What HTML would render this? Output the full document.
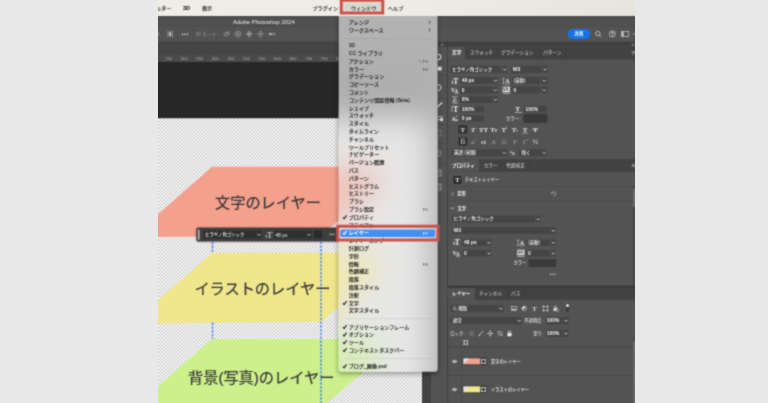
<!DOCTYPE html>
<html lang="ja">
<head>
<meta charset="utf-8">
<title>Photoshop ウィンドウ メニュー</title>
<style>
*{margin:0;padding:0;box-sizing:border-box}
html,body{width:768px;height:403px;overflow:hidden;background:#e8e8e8}
#shot{position:absolute;left:157.9px;top:0;width:476.6px;height:403px;overflow:hidden;background:#535353;filter:url(#soft)}
#P{position:absolute;left:-157.9px;top:0;width:3072px;height:1612px;transform:scale(.25);transform-origin:0 0}
body{font-family:"Liberation Sans","Noto Sans CJK JP",sans-serif;color:#ddd;position:relative}
.a{position:absolute;white-space:nowrap;line-height:1}
.mb{font-size:20.4px;color:#1e1e1e;font-weight:500;-webkit-text-stroke:0.32px #1e1e1e}
.tab{font-size:18.6px;color:#bdbdbd;font-weight:500}
.tab.on{color:#fff;font-weight:700}
.vs{width:2.4px;background:#383838}
.f{background:#454545;border-radius:4px;font-size:18px;color:#f0f0f0;font-weight:500;padding-left:6.4px}
.lb{font-size:17.4px;color:#d8d8d8;font-weight:500}
.mi{font-size:20.4px;color:#1a1a1a;font-weight:500;-webkit-text-stroke:0.4px #1a1a1a}
.sc{font-size:17.6px;color:#505050;font-weight:500}
#checker{background-color:#fff;background-image:conic-gradient(#cbcbcb 25%,#fff 0 50%,#cbcbcb 0 75%,#fff 0);background-size:14px 14px}

</style>
</head>
<body>
<svg width="0" height="0" style="position:absolute"><defs><filter id="soft" x="0" y="0" width="100%" height="100%" color-interpolation-filters="sRGB"><feConvolveMatrix order="3" kernelMatrix="1 2 1 2 9 2 1 2 1" divisor="21" edgeMode="duplicate" preserveAlpha="true"/></filter></defs></svg>
<div id="shot"><div id="P">
<div class="a " style="left:632px;top:64px;width:1908px;height:42px;background:#505050;"></div>
<div class="a " style="left:632px;top:64px;width:1908px;height:2.8px;background:#454545;"></div>
<div class="a " style="left:632px;top:104px;width:1908px;height:2.8px;background:#474747;"></div>
<span class="a " style="left:932px;top:75.6px;font-size:23.6px;color:#e6e6e6;font-weight:500">Adobe Photoshop 2024</span>
<div class="a " style="left:632px;top:106px;width:1908px;height:60px;background:#535353;"></div>
<div class="a " style="left:632px;top:166px;width:1092px;height:54px;background:#454545;"></div>
<div class="a " style="left:632px;top:219.2px;width:1092px;height:28.4px;background:#4a4a4a;"></div>
<div class="a " style="left:632px;top:247.6px;width:1056px;height:1368px;background:#272727;"></div>
<div class="a " style="left:632px;top:468.8px;width:1056px;height:5.6px;background:#1f1f1f;"></div>
<div id="checker" class="a" style="left:632px;top:474px;width:1056px;height:1140px"></div>
<svg class="a" style="left:632px;top:0px;width:1908px;height:1612px" viewBox="158 0 477 403">
<polygon points="212.1,166.8 375,166.8 375,189 321.6,235.5 158,237.1 158,214.2" fill="#f3a08d"/>
<polygon points="212.1,252.8 375,252.8 375,275.3 321.6,321.8 158,323.4 158,300.2" fill="#f0e68c"/>
<polygon points="212.1,338.9 375,338.9 375,361.4 321.6,407.9 158,409.5 158,386.3" fill="#cdf08c"/>
<g stroke="#3f80e8" stroke-opacity="0.95" stroke-width="1.35" stroke-dasharray="2.6 1.2" fill="none">
<path d="M212.5 241.8V252.8M212.5 322.6V338.9"/><path d="M321 241.5V403"/></g>
<g font-family="'Liberation Sans','Noto Sans CJK JP',sans-serif" font-size="15.2" fill="#363636" font-weight="400" stroke="#363636" stroke-width="0.22">
<text x="215" y="208.3">文字のレイヤー</text>
<text x="194.4" y="294">イラストのレイヤー</text>
<text x="188" y="383">背景(写真)のレイヤー</text></g></svg>
<svg class="a" style="left:666px;top:120px;width:32px;height:32px" viewBox="0 0 8 8"><path d="M1.6 0.8V7.2M5.8 0.8V7.2" stroke="#dcdcdc" stroke-width="0.55"/><rect x="3" y="1.8" width="1.4" height="4.4" fill="#dcdcdc"/></svg>
<div class="a " style="left:709.6px;top:114px;width:2px;height:44px;background:#454545;"></div>
<span class="a " style="left:726.4px;top:124.8px;font-size:22.4px;letter-spacing:2px;color:#dcdcdc">•••</span>
<div class="a " style="left:773.2px;top:114px;width:2px;height:44px;background:#454545;"></div>
<span class="a " style="left:780.8px;top:126.8px;font-size:18.4px;color:#8c8c8c;font-weight:500">3D モード :</span>
<svg class="a" style="left:890.8px;top:120px;width:32px;height:32px" viewBox="-4 -4 8 8"><ellipse rx="2.9" ry="1.6" fill="none" stroke="#a0a0a0" stroke-width="0.7" transform="rotate(-20)"/><circle r="1" cx="0.6" cy="-1" fill="none" stroke="#a0a0a0" stroke-width="0.5"/></svg>
<svg class="a" style="left:936px;top:120px;width:32px;height:32px" viewBox="-4 -4 8 8"><circle r="2.9" fill="none" stroke="#a0a0a0" stroke-width="0.7"/><circle r="1.3" fill="none" stroke="#a0a0a0" stroke-width="0.7"/></svg>
<svg class="a" style="left:981.2px;top:120px;width:32px;height:32px" viewBox="-4 -4 8 8"><path d="M0 -3.4L1.5 -1.5H-1.5ZM0 3.4L1.5 1.5H-1.5ZM-3.4 0L-1.5 1.5V-1.5ZM3.4 0L1.5 1.5V-1.5Z" fill="#a0a0a0"/><circle r="1.3" fill="#a0a0a0"/></svg>
<svg class="a" style="left:1025.6px;top:120px;width:32px;height:32px" viewBox="-4 -4 8 8"><path d="M0 -3.4L1.2 -1.9H-1.2ZM0 3.4L1.2 1.9H-1.2ZM-3.4 0L-1.9 1.2V-1.2ZM3.4 0L1.9 1.2V-1.2Z" fill="#a0a0a0"/><path d="M0 -2V2M-2 0H2" stroke="#a0a0a0" stroke-width="0.6"/><circle r="0.7" fill="#a0a0a0"/></svg>
<svg class="a" style="left:1070.8px;top:120px;width:32px;height:32px" viewBox="-4 -4 8 8"><rect x="-3" y="-1.2" width="3.6" height="2.4" fill="#a0a0a0"/><path d="M0.9 0L2.6 -1.4V1.4Z" fill="#a0a0a0"/><path d="M3.2 -1.6V1.6" stroke="#a0a0a0" stroke-width="0.5"/></svg>
<svg class="a" style="left:628px;top:124px;width:16px;height:24px" viewBox="0 0 4 6"><path d="M1 1L2.6 4.6" stroke="#a0a0a0" stroke-width="0.7"/></svg>
<div class="a " style="left:2270.8px;top:115.6px;width:90px;height:40.4px;background:#1473e6;border-radius:20.2px"></div>
<span class="a " style="left:2297.6px;top:126.4px;font-size:18.4px;color:#fff;font-weight:700">共有</span>
<svg class="a" style="left:2377.2px;top:120px;width:32px;height:32px" viewBox="0 0 8 8"><circle cx="3.6" cy="3.6" r="2.2" fill="none" stroke="#e0e0e0" stroke-width="0.7"/><path d="M5.2 5.2L7 7" stroke="#e0e0e0" stroke-width="0.8"/></svg>
<svg class="a" style="left:2432.8px;top:120px;width:32px;height:32px" viewBox="0 0 8 8"><circle cx="4" cy="4" r="3.1" fill="none" stroke="#e0e0e0" stroke-width="0.65"/><text x="4" y="5.9" text-anchor="middle" font-size="5" font-weight="700" fill="#e0e0e0" font-family="Liberation Sans,sans-serif">?</text></svg>
<svg class="a" style="left:2484px;top:123.2px;width:34px;height:25.6px" viewBox="0 0 8.5 6.4"><rect x="0.4" y="0.5" width="7.4" height="5.3" fill="none" stroke="#e0e0e0" stroke-width="0.6"/><rect x="0.4" y="0.5" width="2.4" height="5.3" fill="#bdbdbd"/></svg>
<svg class="a" style="left:2526px;top:126px;width:20px;height:20px" viewBox="0 0 5 5"><path d="M1.2 1.8L2.6 3.2L4 1.8" fill="none" stroke="#c8c8c8" stroke-width="0.6"/></svg>
<div class="a " style="left:658.8px;top:220px;width:1.6px;height:27.2px;background:#626262;"></div>
<span class="a " style="left:662px;top:226px;font-size:16px;color:#ababab">250</span>
<div class="a " style="left:721px;top:220px;width:1.6px;height:27.2px;background:#626262;"></div>
<span class="a " style="left:724.2px;top:226px;font-size:16px;color:#ababab">300</span>
<div class="a " style="left:783.2px;top:220px;width:1.6px;height:27.2px;background:#626262;"></div>
<span class="a " style="left:786.4px;top:226px;font-size:16px;color:#ababab">350</span>
<div class="a " style="left:845.4px;top:220px;width:1.6px;height:27.2px;background:#626262;"></div>
<span class="a " style="left:848.6px;top:226px;font-size:16px;color:#ababab">400</span>
<div class="a " style="left:907.6px;top:220px;width:1.6px;height:27.2px;background:#626262;"></div>
<span class="a " style="left:910.8px;top:226px;font-size:16px;color:#ababab">450</span>
<div class="a " style="left:969.8px;top:220px;width:1.6px;height:27.2px;background:#626262;"></div>
<span class="a " style="left:973px;top:226px;font-size:16px;color:#ababab">500</span>
<div class="a " style="left:1032px;top:220px;width:1.6px;height:27.2px;background:#626262;"></div>
<span class="a " style="left:1035.2px;top:226px;font-size:16px;color:#ababab">550</span>
<div class="a " style="left:1094.2px;top:220px;width:1.6px;height:27.2px;background:#626262;"></div>
<span class="a " style="left:1097.4px;top:226px;font-size:16px;color:#ababab">600</span>
<div class="a " style="left:1156.4px;top:220px;width:1.6px;height:27.2px;background:#626262;"></div>
<span class="a " style="left:1159.6px;top:226px;font-size:16px;color:#ababab">650</span>
<div class="a " style="left:1218.6px;top:220px;width:1.6px;height:27.2px;background:#626262;"></div>
<span class="a " style="left:1221.8px;top:226px;font-size:16px;color:#ababab">700</span>
<div class="a " style="left:1280.8px;top:220px;width:1.6px;height:27.2px;background:#626262;"></div>
<span class="a " style="left:1284px;top:226px;font-size:16px;color:#ababab">750</span>
<div class="a " style="left:1343px;top:220px;width:1.6px;height:27.2px;background:#626262;"></div>
<span class="a " style="left:1346.2px;top:226px;font-size:16px;color:#ababab">800</span>
<div class="a " style="left:785.6px;top:910.4px;width:600px;height:56px;background:#3e3e3e;border-radius:8px;box-shadow:0px 2px 8px rgba(0,0,0,.4)"></div>
<div class="a " style="left:792px;top:917.6px;width:6px;height:41.6px;background:#c4c4c4;border-radius:2px"></div>
<div class="a " style="left:812px;top:922.4px;width:212px;height:32px;background:#303030;border-radius:4px"></div>
<span class="a " style="left:820px;top:930.4px;font-size:17.6px;color:#e0e0e0;font-weight:500">ヒラギノ角ゴシック</span>
<div class="a " style="left:1026.4px;top:922.4px;width:20px;height:32px;background:#303030;border-radius:4px"></div>
<svg class="a" style="left:1024.4px;top:927.2px;width:24px;height:24px" viewBox="-3 -3 6 6"><path d="M-1.35 -0.675L0 0.675L1.35 -0.675" fill="none" stroke="#e6e6e6" stroke-width="0.9"/></svg>
<svg class="a" style="left:1057.6px;top:920px;width:36px;height:40px" viewBox="0 0 9 10"><text x="0.2" y="8.2" font-size="4.6" style="font-family:Liberation Serif,serif;fill:#e6e6e6">T</text><text x="2.4" y="8.2" font-size="9" style="font-family:Liberation Serif,serif;fill:#e6e6e6">T</text></svg>
<div class="a " style="left:1096px;top:922.4px;width:128px;height:32px;background:#303030;border-radius:4px"></div>
<span class="a " style="left:1100.8px;top:928.8px;font-size:20.4px;color:#e0e0e0;font-weight:500">48 px</span>
<div class="a " style="left:1226.4px;top:922.4px;width:20px;height:32px;background:#303030;border-radius:4px"></div>
<svg class="a" style="left:1224.4px;top:927.2px;width:24px;height:24px" viewBox="-3 -3 6 6"><path d="M-1.35 -0.675L0 0.675L1.35 -0.675" fill="none" stroke="#e6e6e6" stroke-width="0.9"/></svg>
<div class="a " style="left:1255.6px;top:922.4px;width:32.4px;height:32px;background:#2a2a2a;border-radius:2.4px"></div>
<span class="a " style="left:1316px;top:928px;font-size:20px;letter-spacing:1.2px;color:#c8c8c8">•••</span>
<div class="a " style="left:1688px;top:220px;width:36px;height:1392px;background:#424242;"></div>
<div class="a " style="left:1724px;top:166px;width:66px;height:1448px;background:#535353;"></div>
<div class="a " style="left:1724px;top:167.2px;width:816px;height:20.4px;background:#404040;"></div>
<div class="a " style="left:1790px;top:186px;width:750px;height:1428px;background:#535353;"></div>
<div class="a " style="left:1788px;top:166px;width:3.2px;height:1448px;background:#3a3a3a;"></div>
<div class="a " style="left:1790px;top:187.6px;width:750px;height:50px;background:#424242;"></div>
<div class="a " style="left:1792px;top:187.6px;width:68px;height:50px;background:#535353;"></div>
<span class="a tab on" style="left:1808px;top:201.2px;">文字</span>
<span class="a tab" style="left:1880px;top:201.2px;">スウォッチ</span>
<span class="a tab" style="left:2004px;top:201.2px;">グラデーション</span>
<span class="a tab" style="left:2172px;top:201.2px;">パターン</span>
<div class="a " style="left:1990px;top:190.4px;width:2.4px;height:47.2px;background:#383838;"></div>
<div class="a " style="left:2156px;top:190.4px;width:2.4px;height:47.2px;background:#383838;"></div>
<div class="a " style="left:2261.6px;top:190.4px;width:2.4px;height:47.2px;background:#383838;"></div>
<div class="a f" style="left:1801.2px;top:263.2px;width:203.2px;height:28.8px;line-height:28.8px;font-weight:500">ヒラギノ角ゴシック</div>
<div class="a " style="left:2008.8px;top:263.2px;width:20px;height:28.8px;background:#454545;border-radius:4px"></div>
<svg class="a" style="left:2006.8px;top:266.4px;width:24px;height:24px" viewBox="-3 -3 6 6"><path d="M-1.35 -0.675L0 0.675L1.35 -0.675" fill="none" stroke="#e6e6e6" stroke-width="0.9"/></svg>
<div class="a f" style="left:2044.4px;top:263.2px;width:120.8px;height:28.8px;line-height:28.8px;font-size:20px;font-weight:700">W3</div>
<div class="a " style="left:2169.2px;top:263.2px;width:20.8px;height:28.8px;background:#454545;border-radius:4px"></div>
<svg class="a" style="left:2167.6px;top:266.4px;width:24px;height:24px" viewBox="-3 -3 6 6"><path d="M-1.35 -0.675L0 0.675L1.35 -0.675" fill="none" stroke="#e6e6e6" stroke-width="0.9"/></svg>
<div class="a f" style="left:1840px;top:308px;width:129.6px;height:28px;line-height:28px;font-size:19.6px;padding-left:7.2px;font-weight:700">48 px</div>
<div class="a " style="left:1972.8px;top:308px;width:18.4px;height:28px;background:#454545;border-radius:4px"></div>
<svg class="a" style="left:1970px;top:310.8px;width:24px;height:24px" viewBox="-3 -3 6 6"><path d="M-1.35 -0.675L0 0.675L1.35 -0.675" fill="none" stroke="#e6e6e6" stroke-width="0.9"/></svg>
<div class="a f" style="left:2047.2px;top:308px;width:114px;height:28px;line-height:28px;">(自動)</div>
<div class="a " style="left:2164.8px;top:308px;width:25.2px;height:28px;background:#454545;border-radius:4px"></div>
<svg class="a" style="left:2165.4px;top:310.8px;width:24px;height:24px" viewBox="-3 -3 6 6"><path d="M-1.35 -0.675L0 0.675L1.35 -0.675" fill="none" stroke="#e6e6e6" stroke-width="0.9"/></svg>
<div class="a f" style="left:1840px;top:346.4px;width:129.6px;height:27.2px;line-height:27.2px;font-size:19.6px;padding-left:7.2px;font-weight:700">0</div>
<div class="a " style="left:1972.8px;top:346.4px;width:18.4px;height:27.2px;background:#454545;border-radius:4px"></div>
<svg class="a" style="left:1970px;top:348.8px;width:24px;height:24px" viewBox="-3 -3 6 6"><path d="M-1.35 -0.675L0 0.675L1.35 -0.675" fill="none" stroke="#e6e6e6" stroke-width="0.9"/></svg>
<div class="a f" style="left:2047.2px;top:346.4px;width:114px;height:27.2px;line-height:27.2px;font-size:19.6px;padding-left:7.2px;font-weight:700">0</div>
<div class="a " style="left:2164.8px;top:346.4px;width:25.2px;height:27.2px;background:#454545;border-radius:4px"></div>
<svg class="a" style="left:2165.4px;top:348.8px;width:24px;height:24px" viewBox="-3 -3 6 6"><path d="M-1.35 -0.675L0 0.675L1.35 -0.675" fill="none" stroke="#e6e6e6" stroke-width="0.9"/></svg>
<div class="a f" style="left:1840px;top:384px;width:129.6px;height:27.6px;line-height:27.6px;font-size:19.6px;padding-left:7.2px;font-weight:700">0%</div>
<div class="a " style="left:1972.8px;top:384px;width:18.4px;height:27.6px;background:#454545;border-radius:4px"></div>
<svg class="a" style="left:1970px;top:386.6px;width:24px;height:24px" viewBox="-3 -3 6 6"><path d="M-1.35 -0.675L0 0.675L1.35 -0.675" fill="none" stroke="#e6e6e6" stroke-width="0.9"/></svg>
<div class="a f" style="left:1840px;top:424px;width:94.8px;height:24.8px;line-height:24.8px;font-size:19.6px;padding-left:7.2px;font-weight:700">100%</div>
<div class="a f" style="left:2095.2px;top:424px;width:92px;height:24.8px;line-height:24.8px;font-size:19.6px;padding-left:7.2px;font-weight:700">100%</div>
<div class="a f" style="left:1840px;top:461.6px;width:94.8px;height:24.8px;line-height:24.8px;font-size:19.6px;padding-left:7.2px;font-weight:700">0 px</div>
<span class="a lb" style="left:2024px;top:464.8px;">カラー :</span>
<div class="a " style="left:2093.2px;top:456px;width:96.8px;height:36px;background:#3a3a3a;border-radius:4px"></div>
<svg class="a" style="left:1804px;top:306px;width:32px;height:34px" viewBox="0 0 8 8.5"><text x="0.2" y="7" font-size="4.2" style="font-family:'Liberation Serif',serif;fill:#ececec;font-weight:700">T</text><text x="2.2" y="7" font-size="7.6" style="font-family:'Liberation Serif',serif;fill:#ececec;font-weight:700">T</text></svg>
<svg class="a" style="left:2008px;top:306px;width:34px;height:34px" viewBox="0 0 8.5 8.5"><text x="3.2" y="6.6" font-size="6" style="font-family:'Liberation Serif',serif;fill:#ececec;font-weight:700">A</text><path d="M1.5 1.5V7.5M0.6 2.6L1.5 1.5L2.4 2.6M0.6 6.4L1.5 7.5L2.4 6.4" stroke="#e0e0e0" stroke-width="0.5" fill="none"/><path d="M3 7.6H8" stroke="#e0e0e0" stroke-width="0.5"/></svg>
<svg class="a" style="left:1804px;top:344px;width:32px;height:34px" viewBox="0 0 8 8.5"><text x="0" y="5.6" font-size="5.4" style="font-family:'Liberation Serif',serif;fill:#ececec;font-weight:700">V</text><text x="3.2" y="6.6" font-size="5.4" style="font-family:'Liberation Serif',serif;fill:#ececec;font-weight:700">A</text><path d="M3.5 7.8H7.6" stroke="#e0e0e0" stroke-width="0.5"/></svg>
<svg class="a" style="left:2008px;top:344px;width:34px;height:34px" viewBox="0 0 8.5 8.5"><rect x="0.6" y="0.6" width="7.3" height="5.6" fill="#e0e0e0"/><text x="0.8" y="5.4" font-size="4.6" font-weight="700" style="font-family:'Liberation Sans',sans-serif;fill:#454545">VA</text><path d="M0.6 7.6H7.9" stroke="#e0e0e0" stroke-width="0.6"/></svg>
<svg class="a" style="left:1804px;top:382px;width:32px;height:34px" viewBox="0 0 8 8.5"><text x="1.2" y="5.6" font-size="4.6" style="font-family:'Noto Sans CJK JP',sans-serif;fill:#e0e0e0">あ</text><path d="M0.8 7.6H7" stroke="#e0e0e0" stroke-width="0.6"/><path d="M0.8 1H7" stroke="#e0e0e0" stroke-width="0.4"/></svg>
<svg class="a" style="left:1804px;top:420px;width:36px;height:32px" viewBox="0 0 9 8"><path d="M1 1V7" stroke="#e0e0e0" stroke-width="0.6"/><text x="2" y="7" font-size="8" style="font-family:'Liberation Serif',serif;fill:#ececec;font-weight:700">T</text></svg>
<svg class="a" style="left:2054px;top:420px;width:40px;height:32px" viewBox="0 0 10 8"><text x="1.8" y="6" font-size="7" style="font-family:'Liberation Serif',serif;fill:#ececec;font-weight:700">T</text><path d="M1 7.4H8.6" stroke="#e0e0e0" stroke-width="0.6"/></svg>
<svg class="a" style="left:1804px;top:458px;width:36px;height:32px" viewBox="0 0 9 8"><text x="0.6" y="6.6" font-size="6" style="font-family:'Liberation Serif',serif;fill:#ececec;font-weight:700">A</text><text x="4.4" y="6.6" font-size="4.4" style="font-family:'Liberation Serif',serif;fill:#ececec;font-weight:700">a</text><path d="M5.6 0.6V2.6" stroke="#e0e0e0" stroke-width="0.5"/></svg>
<div class="a " style="left:1832.8px;top:500.4px;width:36.4px;height:34.8px;background:#333;border-radius:4px"></div>
<div class="a " style="left:1832.8px;top:548px;width:36.4px;height:34.8px;background:#333;border-radius:4px"></div>
<svg class="a" style="left:1831.2px;top:499.6px;width:40px;height:36px" viewBox="-5 -4.5 10 9"><text x="0" y="2.3" text-anchor="middle" font-size="6.8" font-weight="700" fill="#e4e4e4" style="font-family:'Liberation Serif',serif">T</text></svg>
<svg class="a" style="left:1871.6px;top:499.6px;width:40px;height:36px" viewBox="-5 -4.5 10 9"><text x="0" y="2.3" text-anchor="middle" font-size="6.8" font-weight="700" font-style="italic" fill="#e4e4e4" style="font-family:'Liberation Serif',serif">T</text></svg>
<svg class="a" style="left:1913.6px;top:499.6px;width:40px;height:36px" viewBox="-5 -4.5 10 9"><text x="0" y="2.3" text-anchor="middle" font-size="6.8" font-weight="700" fill="#e4e4e4" style="font-family:'Liberation Serif',serif">TT</text></svg>
<svg class="a" style="left:1954px;top:499.6px;width:40px;height:36px" viewBox="-5 -4.5 10 9"><text x="-1" y="2.3" text-anchor="middle" font-size="6.8" font-weight="700" fill="#e4e4e4" style="font-family:'Liberation Serif',serif">T</text><text x="2.4" y="2.3" text-anchor="middle" font-size="4.8" font-weight="700" fill="#e4e4e4" style="font-family:'Liberation Serif',serif">T</text></svg>
<svg class="a" style="left:1997.2px;top:499.6px;width:40px;height:36px" viewBox="-5 -4.5 10 9"><text x="-0.6" y="2.3" text-anchor="middle" font-size="6.8" font-weight="700" fill="#e4e4e4" style="font-family:'Liberation Serif',serif">T</text><text x="2.6" y="-0.6" text-anchor="middle" font-size="4" fill="#e4e4e4" style="font-family:'Liberation Serif',serif">1</text></svg>
<svg class="a" style="left:2037.6px;top:499.6px;width:40px;height:36px" viewBox="-5 -4.5 10 9"><text x="-0.6" y="2.3" text-anchor="middle" font-size="6.8" font-weight="700" fill="#e4e4e4" style="font-family:'Liberation Serif',serif">T</text><text x="2.6" y="2.8" text-anchor="middle" font-size="4" fill="#e4e4e4" style="font-family:'Liberation Serif',serif">1</text></svg>
<svg class="a" style="left:2079.6px;top:499.6px;width:40px;height:36px" viewBox="-5 -4.5 10 9"><text x="0" y="2.3" text-anchor="middle" font-size="7" font-weight="700" fill="#e4e4e4" style="font-family:'Liberation Serif',serif">T</text><path d="M-3 3.6H3" stroke="#e4e4e4" stroke-width="0.5"/></svg>
<svg class="a" style="left:2121.2px;top:499.6px;width:40px;height:36px" viewBox="-5 -4.5 10 9"><text x="0" y="2.3" text-anchor="middle" font-size="6.8" font-weight="700" fill="#e4e4e4" style="font-family:'Liberation Serif',serif">T</text><path d="M-3 0.2H3" stroke="#e4e4e4" stroke-width="0.5"/></svg>
<svg class="a" style="left:1831.2px;top:547.6px;width:40px;height:36px" viewBox="-5 -4.5 10 9"><text x="0" y="2.3" text-anchor="middle" font-size="7.6" fill="#e4e4e4" style="font-family:'Liberation Serif',serif">fi</text></svg>
<svg class="a" style="left:1871.6px;top:547.6px;width:40px;height:36px" viewBox="-5 -4.5 10 9"><text x="0" y="2.4" text-anchor="middle" font-size="7" font-weight="700" font-style="italic" fill="#989898" style="font-family:'Liberation Serif',serif">o</text><path d="M1 -1.6Q2.6 -3.4 3 -1.6" stroke="#989898" stroke-width="0.4" fill="none"/></svg>
<svg class="a" style="left:1913.6px;top:547.6px;width:40px;height:36px" viewBox="-5 -4.5 10 9"><text x="0" y="2.3" text-anchor="middle" font-size="7" font-weight="700" fill="#d0d0d0" style="font-family:'Liberation Serif',serif">st</text></svg>
<svg class="a" style="left:1954px;top:547.6px;width:40px;height:36px" viewBox="-5 -4.5 10 9"><text x="0" y="2.3" text-anchor="middle" font-size="6.8" font-weight="700" font-style="italic" fill="#989898" style="font-family:'Liberation Serif',serif">A</text></svg>
<svg class="a" style="left:1997.2px;top:547.6px;width:40px;height:36px" viewBox="-5 -4.5 10 9"><text x="0" y="2.3" text-anchor="middle" font-size="5.4" font-style="italic" fill="#989898" style="font-family:'Liberation Serif',serif">aa</text><path d="M-2.8 -2.4H2.8" stroke="#989898" stroke-width="0.4"/></svg>
<svg class="a" style="left:2037.6px;top:547.6px;width:40px;height:36px" viewBox="-5 -4.5 10 9"><text x="0" y="2.3" text-anchor="middle" font-size="6.8" font-weight="700" font-style="italic" fill="#989898" style="font-family:'Liberation Serif',serif">T</text></svg>
<svg class="a" style="left:2079.6px;top:547.6px;width:40px;height:36px" viewBox="-5 -4.5 10 9"><text x="-1" y="2.3" text-anchor="middle" font-size="6.8" font-weight="700" fill="#989898" style="font-family:'Liberation Serif',serif">1</text><text x="1.9" y="-0.4" text-anchor="middle" font-size="3.2" fill="#989898" style="font-family:'Liberation Serif',serif">st</text></svg>
<svg class="a" style="left:2121.2px;top:547.6px;width:40px;height:36px" viewBox="-5 -4.5 10 9"><text x="0" y="2.3" text-anchor="middle" font-size="7" font-weight="700" fill="#e4e4e4" style="font-family:'Liberation Serif',serif">½</text></svg>
<div class="a f" style="left:1806px;top:598.4px;width:222.8px;height:26.4px;line-height:26.4px;padding-left:10px">英語 (米国)</div>
<svg class="a" style="left:2005.2px;top:600.4px;width:24px;height:24px" viewBox="-3 -3 6 6"><path d="M-1.35 -0.675L0 0.675L1.35 -0.675" fill="none" stroke="#e6e6e6" stroke-width="0.9"/></svg>
<svg class="a" style="left:2038.4px;top:598.4px;width:28px;height:28px" viewBox="0 0 7 7"><text x="0.2" y="3.8" font-size="4" fill="#e4e4e4" style="font-family:'Liberation Sans',sans-serif">a</text><text x="2.6" y="5.6" font-size="4.6" fill="#e4e4e4" style="font-family:'Liberation Sans',sans-serif">a</text></svg>
<div class="a f" style="left:2074.8px;top:598.4px;width:112.4px;height:26.4px;line-height:26.4px;padding-left:11.6px">強く</div>
<svg class="a" style="left:2165.2px;top:600.4px;width:24px;height:24px" viewBox="-3 -3 6 6"><path d="M-1.35 -0.675L0 0.675L1.35 -0.675" fill="none" stroke="#e6e6e6" stroke-width="0.9"/></svg>
<div class="a " style="left:1790px;top:636.8px;width:750px;height:50px;background:#424242;"></div>
<div class="a " style="left:1790px;top:636.8px;width:126.4px;height:50px;background:#535353;"></div>
<span class="a tab on" style="left:1808px;top:653.2px;">プロパティ</span>
<span class="a tab" style="left:1934.8px;top:653.2px;">カラー</span>
<span class="a tab" style="left:2024.8px;top:653.2px;">色調補正</span>
<div class="a " style="left:2005.6px;top:638.8px;width:2.4px;height:48px;background:#383838;"></div>
<div class="a " style="left:2118px;top:638.8px;width:2.4px;height:48px;background:#383838;"></div>
<svg class="a" style="left:2526.4px;top:203.2px;width:16px;height:16px" viewBox="0 0 4 4"><path d="M0 0.7H4M0 2H4M0 3.3H4" stroke="#c8c8c8" stroke-width="0.55"/></svg>
<svg class="a" style="left:2526.4px;top:654px;width:16px;height:16px" viewBox="0 0 4 4"><path d="M0 0.7H4M0 2H4M0 3.3H4" stroke="#c8c8c8" stroke-width="0.55"/></svg>
<svg class="a" style="left:2526.4px;top:1167.2px;width:16px;height:16px" viewBox="0 0 4 4"><path d="M0 0.7H4M0 2H4M0 3.3H4" stroke="#c8c8c8" stroke-width="0.55"/></svg>
<div class="a " style="left:1812.8px;top:703.6px;width:33.6px;height:32px;background:#2e2e2e;border-radius:3.2px"></div>
<svg class="a" style="left:1812.8px;top:703.6px;width:33.6px;height:32px" viewBox="0 0 8.4 8"><text x="4.2" y="6.3" text-anchor="middle" font-size="6.6" font-weight="700" fill="#f0f0f0" style="font-family:'Liberation Serif',serif">T</text></svg>
<span class="a lb" style="left:1858.8px;top:711.2px;color:#e6e6e6">テキストレイヤー</span>
<div class="a " style="left:1790px;top:744.8px;width:750px;height:2.4px;background:#464646;"></div>
<svg class="a" style="left:1802px;top:766px;width:16px;height:20px" viewBox="0 0 4 5"><path d="M1.2 0.8L2.8 2.5L1.2 4.2" fill="none" stroke="#d0d0d0" stroke-width="0.6"/></svg>
<span class="a lb" style="left:1828.8px;top:766px;color:#f0f0f0;font-weight:700">変形</span>
<svg class="a" style="left:2200.8px;top:761.2px;width:24px;height:28px" viewBox="0 0 6 7"><path d="M1.4 3.2A2 2 0 1 1 3.2 5.6" fill="none" stroke="#c8c8c8" stroke-width="0.6"/><path d="M0.3 2.2L1.4 3.6L2.8 2.6" fill="none" stroke="#c8c8c8" stroke-width="0.6"/></svg>
<div class="a " style="left:1790px;top:800.8px;width:750px;height:2.4px;background:#464646;"></div>
<svg class="a" style="left:1798px;top:821.2px;width:24px;height:24px" viewBox="-3 -3 6 6"><path d="M-1.35 -0.675L0 0.675L1.35 -0.675" fill="none" stroke="#e6e6e6" stroke-width="0.9"/></svg>
<span class="a lb" style="left:1829.6px;top:823.6px;color:#f0f0f0;font-weight:700">文字</span>
<div class="a f" style="left:1807.6px;top:862px;width:332px;height:27.6px;line-height:27.6px;font-weight:500">ヒラギノ角ゴシック</div>
<div class="a " style="left:2143.2px;top:862px;width:20px;height:27.6px;background:#454545;border-radius:4px"></div>
<svg class="a" style="left:2141.2px;top:864.6px;width:24px;height:24px" viewBox="-3 -3 6 6"><path d="M-1.35 -0.675L0 0.675L1.35 -0.675" fill="none" stroke="#e6e6e6" stroke-width="0.9"/></svg>
<div class="a f" style="left:1807.6px;top:908px;width:392px;height:27.6px;line-height:27.6px;font-size:20px;font-weight:700">W3</div>
<div class="a " style="left:2202.4px;top:908px;width:20.8px;height:27.6px;background:#454545;border-radius:4px"></div>
<svg class="a" style="left:2200.8px;top:910.6px;width:24px;height:24px" viewBox="-3 -3 6 6"><path d="M-1.35 -0.675L0 0.675L1.35 -0.675" fill="none" stroke="#e6e6e6" stroke-width="0.9"/></svg>
<svg class="a" style="left:1810px;top:952.8px;width:32px;height:34px" viewBox="0 0 8 8.5"><text x="0.2" y="7" font-size="4.2" style="font-family:'Liberation Serif',serif;fill:#ececec;font-weight:700">T</text><text x="2.2" y="7" font-size="7.6" style="font-family:'Liberation Serif',serif;fill:#ececec;font-weight:700">T</text></svg>
<div class="a f" style="left:1849.2px;top:957.2px;width:94.8px;height:26.4px;line-height:26.4px;font-size:19.6px;padding-left:7.2px;font-weight:700">48 px</div>
<div class="a " style="left:1946.4px;top:957.2px;width:18.4px;height:26.4px;background:#454545;border-radius:4px"></div>
<svg class="a" style="left:1943.6px;top:959.2px;width:24px;height:24px" viewBox="-3 -3 6 6"><path d="M-1.35 -0.675L0 0.675L1.35 -0.675" fill="none" stroke="#e6e6e6" stroke-width="0.9"/></svg>
<svg class="a" style="left:2065.6px;top:952.8px;width:34px;height:34px" viewBox="0 0 8.5 8.5"><text x="3.2" y="6.6" font-size="6" style="font-family:'Liberation Serif',serif;fill:#ececec;font-weight:700">A</text><path d="M1.5 1.5V7.5M0.6 2.6L1.5 1.5L2.4 2.6M0.6 6.4L1.5 7.5L2.4 6.4" stroke="#e0e0e0" stroke-width="0.5" fill="none"/><path d="M3 7.6H8" stroke="#e0e0e0" stroke-width="0.5"/></svg>
<div class="a f" style="left:2105.2px;top:957.2px;width:96px;height:26.4px;line-height:26.4px;">(自動)</div>
<div class="a " style="left:2203.6px;top:957.2px;width:19.6px;height:26.4px;background:#454545;border-radius:4px"></div>
<svg class="a" style="left:2201.4px;top:959.2px;width:24px;height:24px" viewBox="-3 -3 6 6"><path d="M-1.35 -0.675L0 0.675L1.35 -0.675" fill="none" stroke="#e6e6e6" stroke-width="0.9"/></svg>
<svg class="a" style="left:1810px;top:996px;width:32px;height:34px" viewBox="0 0 8 8.5"><text x="0" y="5.6" font-size="5.4" style="font-family:'Liberation Serif',serif;fill:#ececec;font-weight:700">V</text><text x="3.2" y="6.6" font-size="5.4" style="font-family:'Liberation Serif',serif;fill:#ececec;font-weight:700">A</text><path d="M3.5 7.8H7.6" stroke="#e0e0e0" stroke-width="0.5"/></svg>
<div class="a f" style="left:1849.2px;top:1000px;width:94.8px;height:26.4px;line-height:26.4px;font-size:19.6px;padding-left:7.2px;font-weight:700">0</div>
<div class="a " style="left:1946.4px;top:1000px;width:18.4px;height:26.4px;background:#454545;border-radius:4px"></div>
<svg class="a" style="left:1943.6px;top:1002px;width:24px;height:24px" viewBox="-3 -3 6 6"><path d="M-1.35 -0.675L0 0.675L1.35 -0.675" fill="none" stroke="#e6e6e6" stroke-width="0.9"/></svg>
<svg class="a" style="left:2066.4px;top:996px;width:34px;height:34px" viewBox="0 0 8.5 8.5"><rect x="0.6" y="0.6" width="7.3" height="5.6" fill="#e0e0e0"/><text x="0.8" y="5.4" font-size="4.6" font-weight="700" style="font-family:'Liberation Sans',sans-serif;fill:#454545">VA</text><path d="M0.6 7.6H7.9" stroke="#e0e0e0" stroke-width="0.6"/></svg>
<div class="a f" style="left:2105.2px;top:1000px;width:96px;height:26.4px;line-height:26.4px;font-size:19.6px;padding-left:7.2px;font-weight:700">0</div>
<div class="a " style="left:2203.6px;top:1000px;width:19.6px;height:26.4px;background:#454545;border-radius:4px"></div>
<svg class="a" style="left:2201.4px;top:1002px;width:24px;height:24px" viewBox="-3 -3 6 6"><path d="M-1.35 -0.675L0 0.675L1.35 -0.675" fill="none" stroke="#e6e6e6" stroke-width="0.9"/></svg>
<span class="a lb" style="left:2053.6px;top:1043.2px;">カラー</span>
<div class="a " style="left:2113.6px;top:1037.2px;width:111.6px;height:31.2px;background:#3a3a3a;border-radius:4px"></div>
<span class="a lb" style="left:2198.4px;top:1086.4px;font-size:20px;letter-spacing:1.6px;color:#c8c8c8">•••</span>
<div class="a " style="left:2529.6px;top:746px;width:10.4px;height:396px;background:#4a4a4a;"></div>
<div class="a " style="left:2532px;top:752px;width:6.4px;height:76px;background:#6e6e6e;border-radius:3.2px"></div>
<div class="a " style="left:1790px;top:1142.4px;width:750px;height:9.6px;background:#3a3a3a;"></div>
<div class="a " style="left:1790px;top:1152px;width:750px;height:47.2px;background:#424242;"></div>
<div class="a " style="left:1790px;top:1152px;width:110px;height:47.2px;background:#535353;"></div>
<span class="a tab on" style="left:1808px;top:1166.4px;">レイヤー</span>
<span class="a tab" style="left:1916px;top:1166.4px;">チャンネル</span>
<span class="a tab" style="left:2044px;top:1166.4px;">パス</span>
<div class="a " style="left:2028px;top:1154px;width:2.4px;height:45.2px;background:#383838;"></div>
<div class="a " style="left:2099.2px;top:1154px;width:2.4px;height:45.2px;background:#383838;"></div>
<div class="a " style="left:1800.8px;top:1219.2px;width:213.2px;height:28.8px;background:#454545;border-radius:5.6px"></div>
<svg class="a" style="left:1810.4px;top:1224.8px;width:20px;height:20px" viewBox="0 0 5 5"><circle cx="2" cy="2" r="1.5" fill="none" stroke="#dcdcdc" stroke-width="0.6"/><path d="M3.1 3.1L4.6 4.6" stroke="#dcdcdc" stroke-width="0.75"/></svg>
<span class="a lb" style="left:1832.8px;top:1225.2px;color:#f0f0f0">種類</span>
<svg class="a" style="left:1990.8px;top:1222.4px;width:24px;height:24px" viewBox="-3 -3 6 6"><path d="M-1.35 -0.675L0 0.675L1.35 -0.675" fill="none" stroke="#e6e6e6" stroke-width="0.9"/></svg>
<svg class="a" style="left:2036px;top:1216px;width:40px;height:36px" viewBox="-5 -4.5 10 9"><rect x="-2.6" y="-2" width="5.2" height="4" fill="none" stroke="#dcdcdc" stroke-width="0.55"/><path d="M-2.2 1.6L-0.6 -0.2L0.6 0.9L1.3 0.3L2.2 1.6Z" fill="#dcdcdc"/></svg>
<svg class="a" style="left:2076.8px;top:1216px;width:40px;height:36px" viewBox="-5 -4.5 10 9"><circle r="2.2" fill="none" stroke="#dcdcdc" stroke-width="0.55"/><path d="M-1.56 1.56A2.2 2.2 0 0 1 1.56 -1.56Z" fill="#dcdcdc"/></svg>
<svg class="a" style="left:2118px;top:1216px;width:40px;height:36px" viewBox="-5 -4.5 10 9"><text x="0" y="2.3" text-anchor="middle" font-size="6.6" font-weight="700" fill="#dcdcdc" style="font-family:'Liberation Serif',serif">T</text></svg>
<svg class="a" style="left:2161.6px;top:1216px;width:40px;height:36px" viewBox="-5 -4.5 10 9"><rect x="-2.1" y="-2.1" width="4.2" height="4.2" fill="none" stroke="#dcdcdc" stroke-width="0.5"/><rect x="-2.8" y="-2.8" width="1.4" height="1.4" fill="#dcdcdc"/><rect x="-2.8" y="1.4" width="1.4" height="1.4" fill="#dcdcdc"/><rect x="1.4" y="-2.8" width="1.4" height="1.4" fill="#dcdcdc"/><rect x="1.4" y="1.4" width="1.4" height="1.4" fill="#dcdcdc"/></svg>
<svg class="a" style="left:2204px;top:1216px;width:40px;height:36px" viewBox="-5 -4.5 10 9"><rect x="-2.4" y="-0.6" width="3.6" height="3" fill="#dcdcdc"/><path d="M-1.6 -0.6V-1.6A1 1 0 0 1 0.4 -1.6V-0.6" fill="none" stroke="#dcdcdc" stroke-width="0.55"/><rect x="0.2" y="0.6" width="2.4" height="2.2" fill="#535353" stroke="#dcdcdc" stroke-width="0.4"/></svg>
<div class="a " style="left:2263.2px;top:1215.2px;width:13.6px;height:32px;background:#3e3e3e;border-radius:6.8px"></div>
<div class="a " style="left:2263.6px;top:1215.6px;width:12.8px;height:12.8px;background:#e8e8e8;border-radius:6.4px"></div>
<div class="a f" style="left:1800.8px;top:1268px;width:286px;height:28.8px;line-height:28.8px;padding-left:10.4px;border-radius:5.6px">通常</div>
<svg class="a" style="left:2065.2px;top:1271.2px;width:24px;height:24px" viewBox="-3 -3 6 6"><path d="M-1.35 -0.675L0 0.675L1.35 -0.675" fill="none" stroke="#e6e6e6" stroke-width="0.9"/></svg>
<span class="a lb" style="left:2096.8px;top:1274.8px;font-size:17.2px">不透明度 :</span>
<div class="a f" style="left:2183.6px;top:1268px;width:66.4px;height:28.8px;line-height:28.8px;font-size:19.6px;padding-left:3.6px;font-weight:700">100%</div>
<div class="a " style="left:2253.2px;top:1268px;width:21.6px;height:28.8px;background:#454545;border-radius:4px"></div>
<svg class="a" style="left:2252px;top:1271.2px;width:24px;height:24px" viewBox="-3 -3 6 6"><path d="M-1.35 -0.675L0 0.675L1.35 -0.675" fill="none" stroke="#e6e6e6" stroke-width="0.9"/></svg>
<span class="a lb" style="left:1800.8px;top:1325.6px;">ロック :</span>
<svg class="a" style="left:1865.6px;top:1316px;width:40px;height:36px" viewBox="-5 -4.5 10 9"><rect x="-2" y="-2" width="4" height="4" fill="none" stroke="#bbb" stroke-width="0.4" stroke-dasharray="0.7 0.5"/><rect x="-1" y="-1" width="1" height="1" fill="#bbb"/><rect x="0" y="0" width="1" height="1" fill="#bbb"/></svg>
<svg class="a" style="left:1904px;top:1316px;width:40px;height:36px" viewBox="-5 -4.5 10 9"><path d="M-2.2 2.4L-0.4 0.2L2.4 -2.6" stroke="#dcdcdc" stroke-width="0.8" fill="none"/><path d="M-2.6 2.8L-1.8 1L-0.8 2Z" fill="#dcdcdc"/></svg>
<svg class="a" style="left:1941.2px;top:1316px;width:40px;height:36px" viewBox="-5 -4.5 10 9"><path d="M0 -2.7V2.7M-2.7 0H2.7" stroke="#dcdcdc" stroke-width="0.6"/><path d="M0 -3L1 -1.8H-1ZM0 3L1 1.8H-1ZM-3 0L-1.8 1V-1ZM3 0L1.8 1V-1Z" fill="#dcdcdc"/></svg>
<svg class="a" style="left:1980.8px;top:1316px;width:40px;height:36px" viewBox="-5 -4.5 10 9"><path d="M-2.6 -1.6H1.6V2.6M-1.6 -2.6V1.6H2.6" fill="none" stroke="#dcdcdc" stroke-width="0.5"/><path d="M-0.6 -0.4L0.6 0.8" stroke="#dcdcdc" stroke-width="0.5"/></svg>
<svg class="a" style="left:2018px;top:1316px;width:40px;height:36px" viewBox="-5 -4.5 10 9"><rect x="-2" y="-0.4" width="4" height="3.2" rx="0.4" fill="#f0f0f0"/><path d="M-1.2 -0.4V-1.6A1.2 1.2 0 0 1 1.2 -1.6V-0.4" fill="none" stroke="#f0f0f0" stroke-width="0.65"/></svg>
<span class="a lb" style="left:2132.8px;top:1325.6px;">塗り :</span>
<div class="a f" style="left:2183.6px;top:1319.2px;width:66.4px;height:28.8px;line-height:28.8px;font-size:19.6px;padding-left:3.6px;font-weight:700">100%</div>
<div class="a " style="left:2253.2px;top:1319.2px;width:21.6px;height:28.8px;background:#454545;border-radius:4px"></div>
<svg class="a" style="left:2252px;top:1322.4px;width:24px;height:24px" viewBox="-3 -3 6 6"><path d="M-1.35 -0.675L0 0.675L1.35 -0.675" fill="none" stroke="#e6e6e6" stroke-width="0.9"/></svg>
<svg class="a" style="left:1843.2px;top:1352px;width:40px;height:36px" viewBox="-5 -4.5 10 9"><rect x="-1.6" y="-1.6" width="3.2" height="3.2" fill="none" stroke="#e0e0e0" stroke-width="0.5"/><rect x="-2.3" y="-2.3" width="1.4" height="1.4" fill="#e0e0e0"/><rect x="-2.3" y="0.9" width="1.4" height="1.4" fill="#e0e0e0"/><rect x="0.9" y="-2.3" width="1.4" height="1.4" fill="#e0e0e0"/><rect x="0.9" y="0.9" width="1.4" height="1.4" fill="#e0e0e0"/></svg>
<div class="a " style="left:1790px;top:1387.2px;width:740px;height:2.4px;background:#424242;"></div>
<div class="a " style="left:1790px;top:1500px;width:740px;height:2.4px;background:#424242;"></div>
<div class="a " style="left:1844px;top:1388px;width:2.4px;height:224px;background:#474747;"></div>
<svg class="a" style="left:1798px;top:1428px;width:40px;height:36px" viewBox="-5 -4.5 10 9"><path d="M-2.6 0Q0 -2.7 2.6 0Q0 2.7 -2.6 0Z" fill="#535353" stroke="#ececec" stroke-width="0.7"/><circle r="0.8" fill="#ececec"/></svg>
<div class="a " style="left:1850px;top:1430px;width:97.2px;height:31.2px;background:#3a3a3a;border-radius:2.4px"></div>
<svg class="a" style="left:1852.4px;top:1432.4px;width:69.6px;height:26.4px" viewBox="0 0 17.4 6.6"><rect width="17.4" height="6.6" fill="#f3a08d"/><path d="M0 0H6.8L0 6.4Z" fill="#e6e6e6"/><rect x="0.15" y="0.15" width="17.1" height="6.3" fill="none" stroke="#2e2e2e" stroke-width="0.3"/></svg>
<svg class="a" style="left:1914.4px;top:1428px;width:40px;height:36px" viewBox="-5 -4.5 10 9"><rect x="-1.7" y="-1.7" width="3.4" height="3.4" fill="none" stroke="#e8e8e8" stroke-width="0.5"/><rect x="-2.4" y="-2.4" width="1.4" height="1.4" fill="#e8e8e8"/><rect x="-2.4" y="1" width="1.4" height="1.4" fill="#e8e8e8"/><rect x="1" y="-2.4" width="1.4" height="1.4" fill="#e8e8e8"/><rect x="1" y="1" width="1.4" height="1.4" fill="#e8e8e8"/></svg>
<span class="a lb" style="left:1963.2px;top:1437.2px;font-size:17.2px;color:#ececec">文字のレイヤー</span>
<svg class="a" style="left:1798px;top:1540px;width:40px;height:36px" viewBox="-5 -4.5 10 9"><path d="M-2.6 0Q0 -2.7 2.6 0Q0 2.7 -2.6 0Z" fill="#535353" stroke="#ececec" stroke-width="0.7"/><circle r="0.8" fill="#ececec"/></svg>
<div class="a " style="left:1850px;top:1542px;width:97.2px;height:31.2px;background:#3a3a3a;border-radius:2.4px"></div>
<svg class="a" style="left:1852.4px;top:1544.4px;width:69.6px;height:26.4px" viewBox="0 0 17.4 6.6"><rect width="17.4" height="6.6" fill="#f0e68c"/><path d="M0 0H6.8L0 6.4Z" fill="#e6e6e6"/><rect x="0.15" y="0.15" width="17.1" height="6.3" fill="none" stroke="#2e2e2e" stroke-width="0.3"/></svg>
<svg class="a" style="left:1914.4px;top:1540px;width:40px;height:36px" viewBox="-5 -4.5 10 9"><rect x="-1.7" y="-1.7" width="3.4" height="3.4" fill="none" stroke="#e8e8e8" stroke-width="0.5"/><rect x="-2.4" y="-2.4" width="1.4" height="1.4" fill="#e8e8e8"/><rect x="-2.4" y="1" width="1.4" height="1.4" fill="#e8e8e8"/><rect x="1" y="-2.4" width="1.4" height="1.4" fill="#e8e8e8"/><rect x="1" y="1" width="1.4" height="1.4" fill="#e8e8e8"/></svg>
<span class="a lb" style="left:1963.2px;top:1549.2px;font-size:17.2px;color:#ececec">イラストのレイヤー</span>
<div class="a " style="left:2529.6px;top:1358px;width:10.4px;height:256px;background:#484848;"></div>
<div class="a " style="left:2532px;top:1362px;width:6.4px;height:252px;background:#6a6a6a;border-radius:3.2px"></div>
<span class="a " style="left:1762.4px;top:166.4px;font-size:20px;color:#b0b0b0">‹‹</span>
<span class="a " style="left:2526.4px;top:166.4px;font-size:20px;color:#b0b0b0">››</span>
<svg class="a" style="left:1744px;top:212px;width:32px;height:32px" viewBox="0 0 8 8"><path d="M1.6 1.2Q5.2 1.6 4.8 4.4Q4.4 6.8 1.6 7" fill="none" stroke="#e0e0e0" stroke-width="1.2"/></svg>
<div class="a " style="left:1736px;top:267.2px;width:30.4px;height:15.2px;background:#ececec;"></div>
<svg class="a" style="left:1736px;top:334.4px;width:32px;height:32px" viewBox="0 0 8 8"><circle cx="4" cy="4" r="3" fill="none" stroke="#e0e0e0" stroke-width="1"/></svg>
<svg class="a" style="left:1740px;top:406px;width:32px;height:32px" viewBox="0 0 8 8"><path d="M1 7L7 1" stroke="#e0e0e0" stroke-width="1.4"/></svg>
<svg class="a" style="left:1740px;top:458px;width:36px;height:32px" viewBox="0 0 9 8"><path d="M0 2.2H8M0 5.2H8" stroke="#e0e0e0" stroke-width="0.8"/><rect x="5.2" y="3.6" width="2.8" height="3" fill="#e0e0e0"/></svg>
<svg class="a" style="left:1740px;top:516px;width:32px;height:32px" viewBox="0 0 8 8"><rect x="1" y="1" width="5" height="6" fill="none" stroke="#8a8a8a" stroke-width="0.7"/></svg>
<svg class="a" style="left:1736px;top:596px;width:32px;height:32px" viewBox="0 0 8 8"><circle cx="4" cy="4" r="3" fill="none" stroke="#aaa" stroke-width="0.7"/><path d="M4 2.4V4H5.4" stroke="#aaa" stroke-width="0.5" fill="none"/></svg>
<svg class="a" style="left:1740px;top:676px;width:32px;height:32px" viewBox="0 0 8 8"><rect x="1" y="1" width="5" height="6" fill="none" stroke="#bbb" stroke-width="0.7"/><path d="M2.4 3H4.8M2.4 4.6H4.8" stroke="#bbb" stroke-width="0.5"/></svg>
<svg class="a" style="left:1740px;top:732px;width:32px;height:32px" viewBox="0 0 8 8"><rect x="1" y="1" width="5" height="6" fill="none" stroke="#bbb" stroke-width="0.7"/><path d="M2.4 3H4.8M2.4 4.6H4.8" stroke="#bbb" stroke-width="0.5"/></svg>
<div class="a " style="left:1752px;top:248.8px;width:37.6px;height:2px;background:#444;"></div>
<div class="a " style="left:1752px;top:299.2px;width:37.6px;height:2px;background:#444;"></div>
<div class="a " style="left:1752px;top:394px;width:37.6px;height:2px;background:#444;"></div>
<div class="a " style="left:1752px;top:498px;width:37.6px;height:2px;background:#444;"></div>
<div class="a " style="left:1752px;top:574px;width:37.6px;height:2px;background:#444;"></div>
<div class="a " style="left:1752px;top:654px;width:37.6px;height:2px;background:#444;"></div>
<div class="a" style="left:1353.6px;top:64px;width:397.2px;height:1422.8px;border-radius:0px 0px 12.8px 12.8px;overflow:hidden;box-shadow:0px 6px 20px rgba(0,0,0,.35)">
<div class="a" style="left:-1353.6px;top:-64px;width:3072px;height:1612px;filter:blur(60px)">
<div class="a " style="left:1000px;top:-240px;width:1600px;height:2080px;background:#e9e9e9;"></div>
<div class="a " style="left:1000px;top:-240px;width:1600px;height:714px;background:#2c2c2c;"></div>
<div class="a " style="left:1000px;top:-240px;width:1600px;height:488px;background:#3a3a3a;"></div>
<svg class="a" style="left:632px;top:0px;width:1908px;height:1612px" viewBox="158 0 477 403">
<polygon points="212.1,166.8 378,166.8 378,189 324.6,235.5 158,237.1 158,214.2" fill="#ff7050"/>
<polygon points="212.1,252.8 378,252.8 378,275.3 324.6,321.8 158,323.4 158,300.2" fill="#fff040"/>
<polygon points="212.1,338.9 378,338.9 378,361.4 324.6,407.9 158,409.5 158,386.3" fill="#b0ff40"/></svg>
<div class="a " style="left:1720px;top:160px;width:800px;height:1920px;background:#3a3a3a;"></div>
</div>
<div class="a" style="left:0px;top:0px;width:397.2px;height:1422.8px;background:rgba(229,229,229,.70)"></div>
</div>
<span class="a mi" style="left:1394.8px;top:77.8px;color:#222;-webkit-text-stroke-color:#222">アレンジ</span>
<svg class="a" style="left:1710.4px;top:78.8px;width:16px;height:20px" viewBox="0 0 4 5"><path d="M1.2 0.9L2.8 2.5L1.2 4.1" fill="none" stroke="#2b2b2b" stroke-width="0.75"/></svg>
<span class="a mi" style="left:1394.8px;top:108.6px;color:#222;-webkit-text-stroke-color:#222">ワークスペース</span>
<svg class="a" style="left:1710.4px;top:109.6px;width:16px;height:20px" viewBox="0 0 4 5"><path d="M1.2 0.9L2.8 2.5L1.2 4.1" fill="none" stroke="#2b2b2b" stroke-width="0.75"/></svg>
<div class="a " style="left:1377.6px;top:152.2px;width:348.8px;height:2px;background:rgba(0,0,0,.13);"></div>
<div class="a " style="left:1361.2px;top:917.6px;width:378.8px;height:30.8px;background:#4290f6;border-radius:6.4px"></div>
<span class="a mi" style="left:1394.8px;top:171.4px;color:#222;-webkit-text-stroke-color:#222">3D</span>
<span class="a mi" style="left:1394.8px;top:202.6px;color:#222;-webkit-text-stroke-color:#222">CC ライブラリ</span>
<span class="a mi" style="left:1394.8px;top:233.8px;color:#222;-webkit-text-stroke-color:#222">アクション</span>
<span class="a sc" style="right:1360px;top:237.2px;color:#505050">⌥F9</span>
<span class="a mi" style="left:1394.8px;top:265px;color:#222;-webkit-text-stroke-color:#222">カラー</span>
<span class="a sc" style="right:1360px;top:268.4px;color:#505050">F6</span>
<span class="a mi" style="left:1394.8px;top:296.2px;color:#222;-webkit-text-stroke-color:#222">グラデーション</span>
<span class="a mi" style="left:1394.8px;top:327.4px;color:#222;-webkit-text-stroke-color:#222">コピーソース</span>
<span class="a mi" style="left:1394.8px;top:358.6px;color:#222;-webkit-text-stroke-color:#222">コメント</span>
<span class="a mi" style="left:1394.8px;top:389.8px;color:#222;-webkit-text-stroke-color:#222">コンテンツ認証情報 (Beta)</span>
<span class="a mi" style="left:1394.8px;top:421px;color:#222;-webkit-text-stroke-color:#222">シェイプ</span>
<span class="a mi" style="left:1394.8px;top:452.2px;color:#222;-webkit-text-stroke-color:#222">スウォッチ</span>
<span class="a mi" style="left:1394.8px;top:483.4px;color:#222;-webkit-text-stroke-color:#222">スタイル</span>
<span class="a mi" style="left:1394.8px;top:514.6px;color:#222;-webkit-text-stroke-color:#222">タイムライン</span>
<span class="a mi" style="left:1394.8px;top:545.8px;color:#222;-webkit-text-stroke-color:#222">チャンネル</span>
<span class="a mi" style="left:1394.8px;top:577px;color:#222;-webkit-text-stroke-color:#222">ツールプリセット</span>
<span class="a mi" style="left:1394.8px;top:608.2px;color:#222;-webkit-text-stroke-color:#222">ナビゲーター</span>
<span class="a mi" style="left:1394.8px;top:639.4px;color:#222;-webkit-text-stroke-color:#222">バージョン履歴</span>
<span class="a mi" style="left:1394.8px;top:670.6px;color:#222;-webkit-text-stroke-color:#222">パス</span>
<span class="a mi" style="left:1394.8px;top:701.8px;color:#222;-webkit-text-stroke-color:#222">パターン</span>
<span class="a mi" style="left:1394.8px;top:733px;color:#222;-webkit-text-stroke-color:#222">ヒストグラム</span>
<span class="a mi" style="left:1394.8px;top:764.2px;color:#222;-webkit-text-stroke-color:#222">ヒストリー</span>
<span class="a mi" style="left:1394.8px;top:795.4px;color:#222;-webkit-text-stroke-color:#222">ブラシ</span>
<span class="a mi" style="left:1394.8px;top:826.6px;color:#222;-webkit-text-stroke-color:#222">ブラシ設定</span>
<span class="a sc" style="right:1360px;top:830px;color:#505050">F5</span>
<span class="a mi" style="left:1394.8px;top:857.8px;color:#222;-webkit-text-stroke-color:#222">プロパティ</span>
<svg class="a" style="left:1369.2px;top:858.8px;width:20px;height:20px" viewBox="0 0 5 5"><path d="M0.7 2.7L1.9 4.1L4.3 0.7" fill="none" stroke="#222" stroke-width="1.15"/></svg>
<span class="a mi" style="left:1394.8px;top:889px;color:#222;-webkit-text-stroke-color:#222">マテリアル</span>
<span class="a mi" style="left:1394.8px;top:920.2px;color:#fff;-webkit-text-stroke-color:#fff">レイヤー</span>
<svg class="a" style="left:1369.2px;top:921.2px;width:20px;height:20px" viewBox="0 0 5 5"><path d="M0.7 2.7L1.9 4.1L4.3 0.7" fill="none" stroke="#fff" stroke-width="1.15"/></svg>
<span class="a sc" style="right:1360px;top:923.6px;color:#fff">F7</span>
<span class="a mi" style="left:1394.8px;top:951.4px;color:#222;-webkit-text-stroke-color:#222">レイヤーカンプ</span>
<span class="a mi" style="left:1394.8px;top:982.6px;color:#222;-webkit-text-stroke-color:#222">計測ログ</span>
<span class="a mi" style="left:1394.8px;top:1013.8px;color:#222;-webkit-text-stroke-color:#222">字形</span>
<span class="a mi" style="left:1394.8px;top:1045px;color:#222;-webkit-text-stroke-color:#222">情報</span>
<span class="a sc" style="right:1360px;top:1048.4px;color:#505050">F8</span>
<span class="a mi" style="left:1394.8px;top:1076.2px;color:#222;-webkit-text-stroke-color:#222">色調補正</span>
<span class="a mi" style="left:1394.8px;top:1107.4px;color:#222;-webkit-text-stroke-color:#222">段落</span>
<span class="a mi" style="left:1394.8px;top:1138.6px;color:#222;-webkit-text-stroke-color:#222">段落スタイル</span>
<span class="a mi" style="left:1394.8px;top:1169.8px;color:#222;-webkit-text-stroke-color:#222">注釈</span>
<span class="a mi" style="left:1394.8px;top:1201px;color:#222;-webkit-text-stroke-color:#222">文字</span>
<svg class="a" style="left:1369.2px;top:1202px;width:20px;height:20px" viewBox="0 0 5 5"><path d="M0.7 2.7L1.9 4.1L4.3 0.7" fill="none" stroke="#222" stroke-width="1.15"/></svg>
<span class="a mi" style="left:1394.8px;top:1232.2px;color:#222;-webkit-text-stroke-color:#222">文字スタイル</span>
<div class="a " style="left:1377.6px;top:1273.8px;width:348.8px;height:2px;background:rgba(0,0,0,.13);"></div>
<span class="a mi" style="left:1394.8px;top:1296.6px;color:#222;-webkit-text-stroke-color:#222">アプリケーションフレーム</span>
<svg class="a" style="left:1369.2px;top:1297.6px;width:20px;height:20px" viewBox="0 0 5 5"><path d="M0.7 2.7L1.9 4.1L4.3 0.7" fill="none" stroke="#222" stroke-width="1.15"/></svg>
<span class="a mi" style="left:1394.8px;top:1327px;color:#222;-webkit-text-stroke-color:#222">オプション</span>
<svg class="a" style="left:1369.2px;top:1328px;width:20px;height:20px" viewBox="0 0 5 5"><path d="M0.7 2.7L1.9 4.1L4.3 0.7" fill="none" stroke="#222" stroke-width="1.15"/></svg>
<span class="a mi" style="left:1394.8px;top:1358.2px;color:#222;-webkit-text-stroke-color:#222">ツール</span>
<svg class="a" style="left:1369.2px;top:1359.2px;width:20px;height:20px" viewBox="0 0 5 5"><path d="M0.7 2.7L1.9 4.1L4.3 0.7" fill="none" stroke="#222" stroke-width="1.15"/></svg>
<span class="a mi" style="left:1394.8px;top:1389.4px;color:#222;-webkit-text-stroke-color:#222">コンテキストタスクバー</span>
<svg class="a" style="left:1369.2px;top:1390.4px;width:20px;height:20px" viewBox="0 0 5 5"><path d="M0.7 2.7L1.9 4.1L4.3 0.7" fill="none" stroke="#222" stroke-width="1.15"/></svg>
<div class="a " style="left:1377.6px;top:1432.2px;width:348.8px;height:2px;background:rgba(0,0,0,.13);"></div>
<span class="a mi" style="left:1394.8px;top:1453.8px;color:#222;-webkit-text-stroke-color:#222">ブログ_画像.psd</span>
<svg class="a" style="left:1369.2px;top:1454.8px;width:20px;height:20px" viewBox="0 0 5 5"><path d="M0.7 2.7L1.9 4.1L4.3 0.7" fill="none" stroke="#222" stroke-width="1.15"/></svg>
<div class="a" style="left:1345.2px;top:898.8px;width:412.4px;height:66.8px;border:12px solid #c8524a;background:transparent"></div>
<div class="a " style="left:628px;top:0px;width:1916px;height:64px;background:linear-gradient(90deg,#f0ede7 0%,#efece6 45%,#e8e4de 100%);"></div>
<div class="a " style="left:1370px;top:8.8px;width:156px;height:38.4px;background:#dad7d1;"></div>
<div class="a" style="left:1358.8px;top:-4.8px;width:178px;height:62.8px;border:12px solid #c8524a"></div>
<span class="a mb" style="left:604px;top:22px;">ィルター</span>
<span class="a mb" style="left:732px;top:20.8px;font-weight:700;font-size:22.4px">3D</span>
<span class="a mb" style="left:808px;top:22px;">表示</span>
<span class="a mb" style="left:1250px;top:22px;">プラグイン</span>
<span class="a mb" style="left:1404px;top:22px;">ウィンドウ</span>
<span class="a mb" style="left:1552px;top:22px;">ヘルプ</span>
</div></div>
</body>
</html>
